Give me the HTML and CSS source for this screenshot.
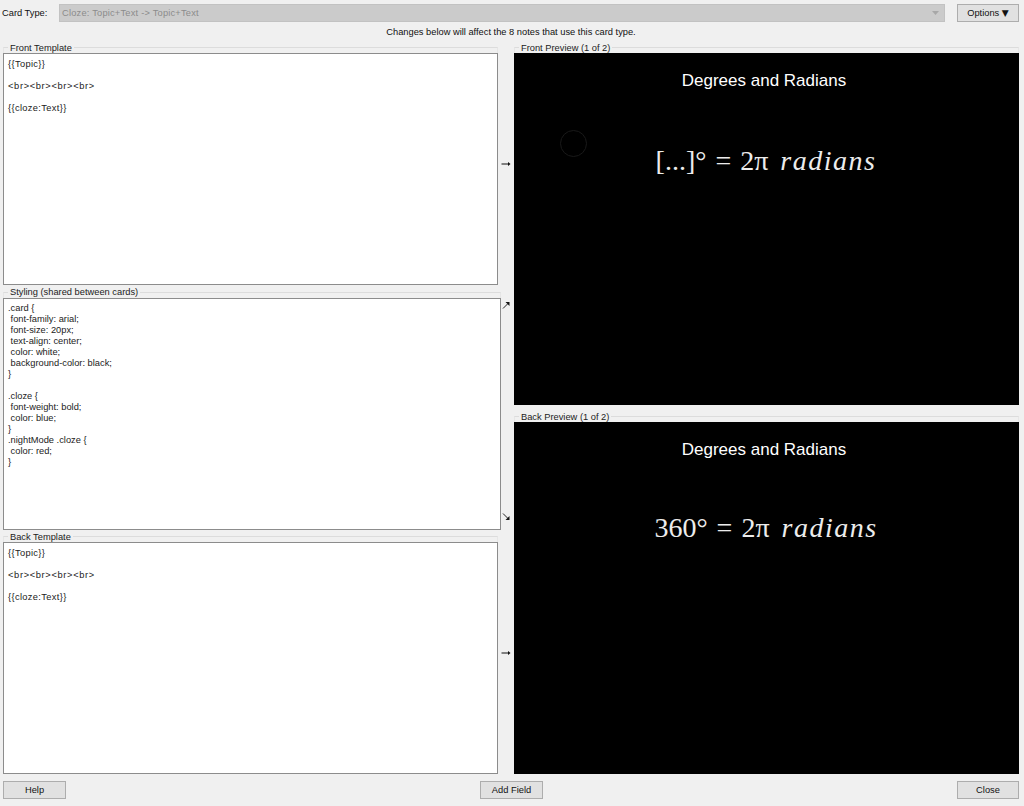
FILE: index.html
```html
<!DOCTYPE html>
<html lang="en">
<head>
<meta charset="utf-8">
<title>Card Types</title>
<link rel="stylesheet" href="styles.css">
</head>
<body>
<div class="app">
  <header class="toolbar">
    <span class="type-label">Card Type:</span>
    <div class="select">
      <span>Cloze: Topic+Text -&gt; Topic+Text</span>
      <svg class="caret" width="7" height="4" viewBox="0 0 7 4"><path d="M0 0h7L3.500 4z" fill="#a8a8a8"/></svg>
    </div>
    <button class="btn options">Options <span class="tri">▼</span></button>
  </header>
  <p class="notice">Changes below will affect the 8 notes that use this card type.</p>
  <main class="main">
    <div class="col-left">
      <section class="group">
        <div class="legend">Front Template</div>
        <pre class="editor"><span class="field">{{Topic}}</span>

<span class="tags">&lt;br&gt;&lt;br&gt;&lt;br&gt;&lt;br&gt;</span>

<span class="field">{{cloze:Text}}</span></pre>
      </section>
      <section class="group group-wide">
        <div class="legend">Styling (shared between cards)</div>
        <pre class="editor">.card {
 font-family: arial;
 font-size: 20px;
 text-align: center;
 color: white;
 background-color: black;
}

.cloze {
 font-weight: bold;
 color: blue;
}
.nightMode .cloze {
 color: red;
}</pre>
      </section>
      <section class="group">
        <div class="legend">Back Template</div>
        <pre class="editor"><span class="field">{{Topic}}</span>

<span class="tags">&lt;br&gt;&lt;br&gt;&lt;br&gt;&lt;br&gt;</span>

<span class="field">{{cloze:Text}}</span></pre>
      </section>
    </div>
    <div class="arrows">
      <svg width="10" height="10" viewBox="0 0 10 10"><path d="M0.500 5h7" stroke="#111" fill="none"/><path d="M7 3l2.500 2L7 7z" fill="#111"/></svg>
      <svg width="10" height="10" viewBox="0 0 10 10"><path d="M2 8.500L7 3.500" stroke="#222" fill="none"/><path d="M4.500 2H8.500V6z" fill="#111"/></svg>
      <svg width="10" height="10" viewBox="0 0 10 10"><path d="M2 1.500L7 6.500" stroke="#222" fill="none"/><path d="M8.500 4V8H4.500z" fill="#111"/></svg>
      <svg width="10" height="10" viewBox="0 0 10 10"><path d="M0.500 5h7" stroke="#111" fill="none"/><path d="M7 3l2.500 2L7 7z" fill="#111"/></svg>
    </div>
    <div class="col-right">
      <section class="group preview-group">
        <div class="legend">Front Preview (1 of 2)</div>
        <div class="preview preview-front">
          <h2 class="topic">Degrees and Radians</h2>
          <div class="math"><span class="br">[...]</span>° = 2π <i class="it">radians</i></div>
          <span class="cursor-ring"></span>
        </div>
      </section>
      <section class="group preview-group">
        <div class="legend">Back Preview (1 of 2)</div>
        <div class="preview preview-back">
          <h2 class="topic">Degrees and Radians</h2>
          <div class="math">360° = 2π <i class="it">radians</i></div>
        </div>
      </section>
    </div>
  </main>
  <footer class="footer">
    <button class="btn">Help</button>
    <button class="btn">Add Field</button>
    <button class="btn btn-narrow">Close</button>
  </footer>
</div>
</body>
</html>
```
FILE: styles.css
```css
* { box-sizing: border-box; }
html, body { margin: 0; padding: 0; }
body {
  width: 1024px;
  height: 806px;
  overflow: hidden;
  background: #f0f0f0;
  color: #111;
  font: 9.3px/11px "Liberation Sans", Arial, sans-serif;
}
.app { display: flex; flex-direction: column; height: 806px; padding: 4px 5px 8px 3px; }
.toolbar { display: flex; align-items: flex-start; height: 18px; }
.type-label { width: 57px; margin-left: -1px; line-height: 18px; }
.select {
  width: 886px;
  height: 18px;
  display: flex;
  align-items: center;
  justify-content: space-between;
  padding: 0 5px 0 2px;
  background: #cbcbcb;
  border: 1px solid #c2c2c2;
  color: #8c8c8c;
  letter-spacing: 0.2px;
}
.btn {
  width: 63px;
  height: 18px;
  padding: 0;
  background: #e1e1e1;
  border: 1px solid #adadad;
  color: #111;
  font: inherit;
}
.btn-narrow { width: 62px; }
.options { width: 62px; margin-left: 12px; }
.tri { font-size: 9px; font-family: "DejaVu Sans", sans-serif; }
.notice { margin: 5px 0 0; text-align: center; height: 11px; }
.main { display: grid; grid-template-columns: 495px 16px 505px; margin-top: 9px; height: 727px; }
.col-left, .col-right { display: flex; flex-direction: column; }
.col-left { gap: 6px; }
.group { border-top: 1px solid #dcdcdc; border-left: 1px solid #e6e6e6; border-right: 1px solid #e6e6e6; display: flex; flex-direction: column; }
.group-wide { margin: 1px -3px 0 0; }
.legend { margin: -5px 0 0 4px; height: 10px; width: fit-content; padding: 0 2px; background: #f0f0f0; color: #222; }
.group-wide .legend { margin-top: -6px; height: 11px; }
.editor {
  margin: 0 -1px;
  height: 232px;
  padding: 5px 4px 4px;
  background: #fff;
  border: 1px solid #8c8c8c;
  font: inherit;
  color: #222;
  overflow: hidden;
}
.group-wide .editor { padding-top: 4px; }
.field { letter-spacing: 0.35px; }
.tags { letter-spacing: 0.65px; }
.arrows { display: grid; grid-template-rows: 122px 141px 212px 136px; justify-items: center; align-items: end; padding-right: 1px; }
.arrows svg { display: block; }
.col-right { gap: 11px; }
.preview-group { flex: none; }
.preview { position: relative; margin: 0 -1px; height: 352px; padding-right: 5px; background: #000; color: #fff; text-align: center; }
.topic { margin: 0; padding-top: 17px; font: 400 17px/22px "Liberation Sans", Arial, sans-serif; }
.math { font: 400 28px/30px "Liberation Serif", "Times New Roman", serif; white-space: pre; word-spacing: 2px; color: #ececec; padding: 54px 0 0 4px; }
.preview-back .math { padding-top: 52px; }
.it { letter-spacing: 1.5px; margin-left: 3px; }
.cursor-ring { position: absolute; left: 46px; top: 77px; width: 27px; height: 27px; border: 1.5px solid #191919; border-radius: 50%; }
.footer { display: flex; justify-content: space-between; margin-top: 7px; }
```
